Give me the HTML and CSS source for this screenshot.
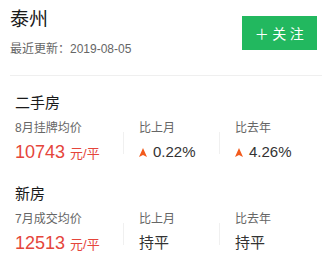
FILE: index.html
```html
<!DOCTYPE html>
<html lang="zh-CN">
<head>
	<meta charset="UTF-8" />
	<meta name="viewport" content="width=device-width, initial-scale=1" />
	<title>泰州 房价</title>
	<link rel="stylesheet" href="styles.css">
</head>
<body>
	<div class="header">
		<div class="city">
			<div class="city_name">泰州</div>
			<div class="update">最近更新：2019-08-05</div>
		</div>
		<div class="follow">＋关注</div>
	</div>
	<div class="line"></div>

	<div class="section">
		<div class="section_title">二手房</div>
		<div class="stats">
			<div class="col col_price">
				<div class="label">8月挂牌均价</div>
				<div class="price">10743 <span class="unit">元/平</span></div>
			</div>
			<div class="divider"></div>
			<div class="col">
				<div class="label">比上月</div>
				<div class="change">
					<svg class="up" width="8" height="9" viewBox="0 0 8 9"><path d="M4 0 L8 9 L4 7 L0 9 Z" /></svg>0.22%
				</div>
			</div>
			<div class="divider"></div>
			<div class="col">
				<div class="label">比去年</div>
				<div class="change">
					<svg class="up" width="8" height="9" viewBox="0 0 8 9"><path d="M4 0 L8 9 L4 7 L0 9 Z" /></svg>4.26%
				</div>
			</div>
		</div>
	</div>

	<div class="section">
		<div class="section_title">新房</div>
		<div class="stats">
			<div class="col col_price">
				<div class="label">7月成交均价</div>
				<div class="price">12513 <span class="unit">元/平</span></div>
			</div>
			<div class="divider"></div>
			<div class="col">
				<div class="label">比上月</div>
				<div class="change">持平</div>
			</div>
			<div class="divider"></div>
			<div class="col">
				<div class="label">比去年</div>
				<div class="change">持平</div>
			</div>
		</div>
	</div>
</body>
</html>
```

FILE: styles.css
```css
body{
	margin: 0;
	background-color: #fff;
	font-family: "Liberation Sans", "Noto Sans CJK SC", sans-serif;
	color: #333;
}

.header{
	display: flex;
	justify-content: space-between;
	align-items: flex-start;
	padding: 7px 15px 17px 10px;
}

.city_name{
	font-size: 19px;
	line-height: 26px;
	color: #1a1a1a;
}

.update{
	margin-top: 8px;
	font-size: 12px;
	line-height: 17px;
	color: #666;
}

.follow{
	margin-top: 9px;
	width: 75px;
	height: 34px;
	line-height: 34px;
	padding-left: 3px;
	box-sizing: border-box;
	text-align: center;
	background-color: #22b85f;
	color: #fff;
	font-size: 14px;
	letter-spacing: 3.5px;
	font-family: "Noto Sans CJK SC", sans-serif;
}

.line{
	height: 1px;
	margin: 0 10px;
	background-color: #efefef;
}

.section{
	padding: 16px 0 0 15px;
}

.section + .section{
	padding-top: 17px;
}

.section_title{
	font-size: 15px;
	line-height: 21px;
	color: #1a1a1a;
}

.stats{
	display: flex;
	margin-top: 7px;
}

.col{
	width: 80px;
	padding-left: 15px;
}

.col_price{
	width: 108px;
	padding-left: 0;
}

.divider{
	width: 1px;
	height: 22px;
	margin-top: 12px;
	background-color: #f0f0f0;
}

.label{
	font-size: 12px;
	line-height: 17px;
	color: #666;
}

.price{
	margin-top: 3px;
	font-size: 18px;
	line-height: 24px;
	color: #e5453b;
}

.unit{
	font-size: 13px;
}

.change{
	margin-top: 3px;
	font-size: 15px;
	line-height: 24px;
	color: #333;
	display: flex;
	align-items: center;
}

.up{
	fill: #f25a1c;
	margin-right: 6px;
}
```
